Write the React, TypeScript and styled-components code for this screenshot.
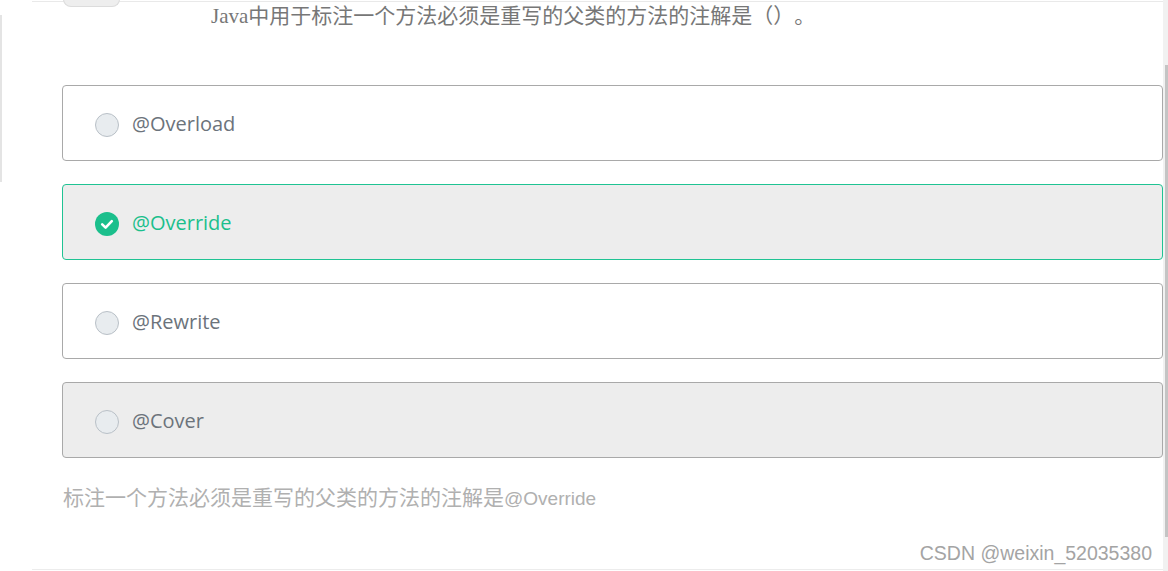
import React from "react";
import styled, { createGlobalStyle } from "styled-components";

const GlobalStyle = createGlobalStyle`
  html, body {
    margin: 0;
    padding: 0;
    background: #ffffff;
    overflow: hidden;
  }
  #root {
    height: 571px;
  }
`;

const Page = styled.div`
  display: flex;
  height: 571px;
  width: 1168px;
  background: #ffffff;
`;

const LeftRail = styled.div`
  width: 32px;
  flex: none;
  display: flex;
  flex-direction: column;
`;

const RailStrip = styled.div`
  width: 2px;
  height: 167px;
  margin-top: 15px;
  background: #e4e4e4;
`;

const Main = styled.main`
  flex: 1;
  position: relative;
  margin-top: 1px;
  height: 567px;
  border-top: 1px solid #e9e9e9;
  border-bottom: 1px solid #ececec;
  padding-left: 30px;
  display: flex;
  flex-direction: column;
`;

const Header = styled.div`
  display: flex;
  align-items: flex-start;
  height: 28px;
`;

const Pill = styled.div`
  width: 55px;
  height: 7px;
  margin-top: -3px;
  margin-left: 1px;
  background: #eeeeee;
  border: 1px solid #dcdcdc;
  border-top: none;
  border-radius: 0 0 9px 9px;
`;

const Title = styled.div`
  margin-left: 91px;
  margin-top: 2px;
  font-family: "Liberation Serif", "Noto Sans CJK SC", serif;
  font-size: 21px;
  line-height: 24px;
  color: #777777;
  white-space: nowrap;
  text-spacing-trim: space-all;
`;

const Options = styled.div`
  display: flex;
  flex-direction: column;
  gap: 23px;
  margin-top: 55px;
`;

const Option = styled.div<{ $selected?: boolean; $hover?: boolean }>`
  height: 76px;
  box-sizing: border-box;
  display: flex;
  align-items: center;
  gap: 13px;
  padding-left: 32px;
  border-radius: 4px;
  border: 1px solid ${(p) => (p.$selected ? "#1fc393" : "#a9a9a9")};
  background: ${(p) => (p.$selected || p.$hover ? "#ededed" : "#ffffff")};
`;

const Radio = styled.span`
  width: 22px;
  height: 22px;
  margin-top: 3px;
  border-radius: 50%;
  background: #e8ecef;
  border: 1px solid #b9c0c7;
  flex: none;
`;

const CheckIcon = styled.svg`
  width: 24px;
  height: 24px;
  margin-top: 3px;
  flex: none;
`;

const Label = styled.span<{ $selected?: boolean }>`
  font-family: "Open Sans", "Noto Sans", sans-serif;
  font-size: 20px;
  line-height: 28px;
  margin-top: 2px;
  color: ${(p) => (p.$selected ? "#1bbf8c" : "#6c737b")};
`;

const Explanation = styled.div`
  margin-top: 26px;
  margin-left: 1px;
  font-family: "Liberation Sans", "Noto Sans CJK SC", sans-serif;
  font-size: 21px;
  line-height: 28px;
  color: #b0b0b0;
  white-space: nowrap;
`;

const Latin = styled.span`
  font-size: 19px;
`;

const Watermark = styled.div`
  position: absolute;
  right: 11px;
  bottom: 5px;
  font-family: "Liberation Sans", Arial, sans-serif;
  font-size: 19.5px;
  line-height: 22px;
  color: #a4a4a4;
  white-space: nowrap;
`;

const Scrollbar = styled.div`
  width: 5px;
  flex: none;
  background: #f1f1f1;
  display: flex;
  justify-content: flex-end;
`;

const Thumb = styled.div`
  width: 3px;
  height: 472px;
  margin-top: 65px;
  background: #c4c4c4;
`;

const options = [
  { label: "@Overload" },
  { label: "@Override", selected: true },
  { label: "@Rewrite" },
  { label: "@Cover", hover: true },
];

export default function App() {
  return (
    <>
      <GlobalStyle />
      <Page>
        <LeftRail>
          <RailStrip />
        </LeftRail>
        <Main>
          <Header>
            <Pill />
            <Title>Java中用于标注一个方法必须是重写的父类的方法的注解是（）。</Title>
          </Header>
          <Options>
            {options.map((o) => (
              <Option key={o.label} $selected={o.selected} $hover={o.hover}>
                {o.selected ? (
                  <CheckIcon viewBox="0 0 24 24">
                    <circle cx="12" cy="12" r="12" fill="#1bbf8c" />
                    <path
                      d="M7.2 12.4 L10.6 15.6 L16.8 9.2"
                      fill="none"
                      stroke="#ffffff"
                      strokeWidth="2.6"
                      strokeLinecap="round"
                      strokeLinejoin="round"
                    />
                  </CheckIcon>
                ) : (
                  <Radio />
                )}
                <Label $selected={o.selected}>{o.label}</Label>
              </Option>
            ))}
          </Options>
          <Explanation>
            标注一个方法必须是重写的父类的方法的注解是<Latin>@Override</Latin>
          </Explanation>
          <Watermark>CSDN @weixin_52035380</Watermark>
        </Main>
        <Scrollbar>
          <Thumb />
        </Scrollbar>
      </Page>
    </>
  );
}
